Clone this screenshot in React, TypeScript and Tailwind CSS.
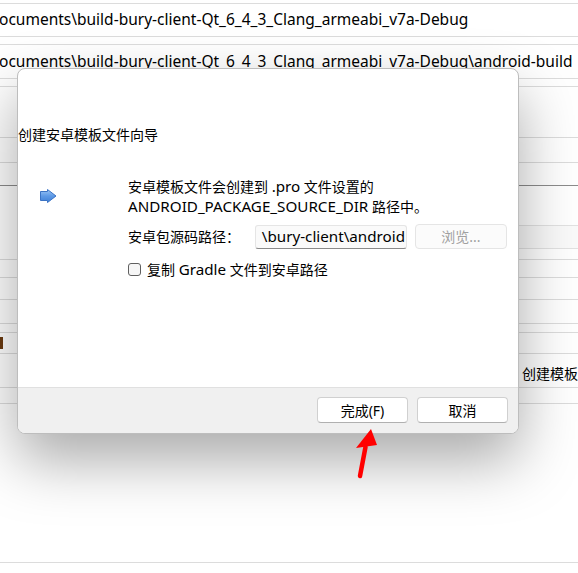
import React from "react";

const font = "font-['Segoe_UI','Noto_Sans','Noto_Sans_CJK_SC',sans-serif]";

// blue "next" arrow of the wizard page
const NextArrow = () => (
  <svg width="17" height="15" viewBox="0 0 17 15">
    <defs>
      <linearGradient id="arrowFill" x1="0" y1="0" x2="0" y2="1">
        <stop offset="0" stopColor="#9cc6f5" />
        <stop offset="0.5" stopColor="#5e9ae6" />
        <stop offset="1" stopColor="#3f7fd6" />
      </linearGradient>
    </defs>
    <path
      d="M0.5 2.5 H7.5 V0.5 L16 7 L7.5 13.5 V11.5 H0.5 Z"
      fill="url(#arrowFill)"
      stroke="#3b73c4"
      strokeWidth="1"
      strokeLinejoin="round"
    />
  </svg>
);

const RedPointer = () => (
  <svg
    className="absolute left-[350px] top-[425px]"
    width="34"
    height="58"
    viewBox="0 0 34 58"
  >
    <line x1="10" y1="51" x2="15.5" y2="22" stroke="#ff0000" strokeWidth="4.5" strokeLinecap="round" />
    <polygon points="21,4 6,23 27,20" fill="#ff0000" />
  </svg>
);

// latin text in the dialog renders a bit wider than the CJK text around it
const Latin = ({ children }: { children: React.ReactNode }) => (
  <span className="text-[15.2px]">{children}</span>
);

export default function App() {
  return (
    <div className={`relative w-[578px] h-[573px] overflow-hidden bg-white text-[14px] text-black ${font}`}>
      {/* page behind the wizard */}
      <div className="flex flex-col">
        <div className="h-[4px] border-b border-[#dcdcdc]" />
        <div className="h-[33px] border-b border-[#dcdcdc] flex items-center -ml-[1px] text-[15.5px] whitespace-nowrap">
          ocuments\build-bury-client-Qt_6_4_3_Clang_armeabi_v7a-Debug
        </div>
        <div className="h-[8px] border-b border-[#dcdcdc]" />
        <div className="h-[34px] border-b border-[#dcdcdc] flex items-center -ml-[1px] text-[15.5px] whitespace-nowrap overflow-hidden">
          ocuments\build-bury-client-Qt_6_4_3_Clang_armeabi_v7a-Debug\android-build
        </div>
        <div className="h-[8px] border-b border-[#dcdcdc]" />
        <div className="h-[51px] border-b border-[#dcdcdc]" />
        <div className="h-[25px] border-b border-[#dcdcdc]" />
        <div className="h-[23px] border-b border-[#8c8c8c]" />
        <div className="h-[74px] border-b border-[#dcdcdc] flex flex-col items-end">
          <div className="mt-[39px] h-[24px] w-[200px] border-y border-[#e2e2e2] bg-[#fafafa]" />
        </div>
        <div className="h-[18px] border-b border-[#dcdcdc]" />
        <div className="h-[22px] border-b border-[#dcdcdc]" />
        <div className="h-[24px] border-b border-[#dcdcdc]" />
        <div className="h-[9px] border-b border-[#dcdcdc]" />
        <div className="h-[21px] border-b border-[#dcdcdc] flex items-center">
          <span className="w-[3px] h-[12px] bg-[#6b3a10]" />
        </div>
        <div className="h-[34px] border-b border-[#dcdcdc] flex items-end justify-end pb-[3px]">
          <span className="w-[56px] overflow-hidden whitespace-nowrap">创建模板</span>
        </div>
        <div className="h-[16px] border-b border-[#dcdcdc]" />
        <div className="h-[159px] border-b border-[#dcdcdc]" />
      </div>

      {/* wizard dialog */}
      <div className="absolute left-[17px] top-[68px] w-[502px] h-[366px] flex flex-col rounded-[8px] border border-[#bdbdbd] bg-white shadow-[0_26px_60px_rgba(0,0,0,0.34)] overflow-hidden">
        <div className="h-[318px] flex flex-col pt-[56px]">
          <div className="h-[20px] leading-[20px]">创建安卓模板文件向导</div>

          <div className="mt-[31px] flex items-center">
            <div className="w-[110px] pl-[22px] flex">
              <NextArrow />
            </div>
            <div className="flex flex-col">
              <div className="h-[20px] flex items-center whitespace-nowrap">
                安卓模板文件会创建到&nbsp;<Latin>.pro</Latin>&nbsp;文件设置的
              </div>
              <div className="h-[20px] flex items-center whitespace-nowrap">
                <Latin>ANDROID_PACKAGE_SOURCE_DIR</Latin>&nbsp;路径中。
              </div>
            </div>
          </div>

          <div className="mt-[8px] ml-[110px] flex items-center h-[25px]">
            <div className="w-[127px]">安卓包源码路径：</div>
            <div className="w-[152px] h-[24px] flex justify-end items-center overflow-hidden whitespace-nowrap bg-[#fafafa] border border-[#e5e5e5] border-b-[#8a8a8a] rounded-[3px] pr-[1px]">
              <Latin>\bury-client\android</Latin>
            </div>
            <button className="ml-[8px] w-[92px] h-[25px] rounded-[4px] border border-[#e5e5e5] bg-[#fbfbfb] text-[#a0a0a0]">
              浏览...
            </button>
          </div>

          <label className="mt-[10px] ml-[110px] h-[20px] flex items-center gap-[6px] whitespace-nowrap">
            <span className="w-[13px] h-[13px] rounded-[3px] border border-[#5f5f5f] bg-[#f6f6f6]" />
            <span className="flex items-center">
              复制&nbsp;<Latin>Gradle</Latin>&nbsp;文件到安卓路径
            </span>
          </label>
        </div>

        <div className="flex-1 border-t border-[#e0e0e0] bg-[#f0f0f0] flex justify-end items-start pt-[9px] pr-[10px] gap-[9px]">
          <button className="w-[91px] h-[26px] rounded-[4px] border border-[#d0d0d0] border-b-[#b0b0b0] bg-white">
            完成(F)
          </button>
          <button className="w-[91px] h-[26px] rounded-[4px] border border-[#d0d0d0] border-b-[#b0b0b0] bg-white">
            取消
          </button>
        </div>
      </div>

      <RedPointer />
    </div>
  );
}
